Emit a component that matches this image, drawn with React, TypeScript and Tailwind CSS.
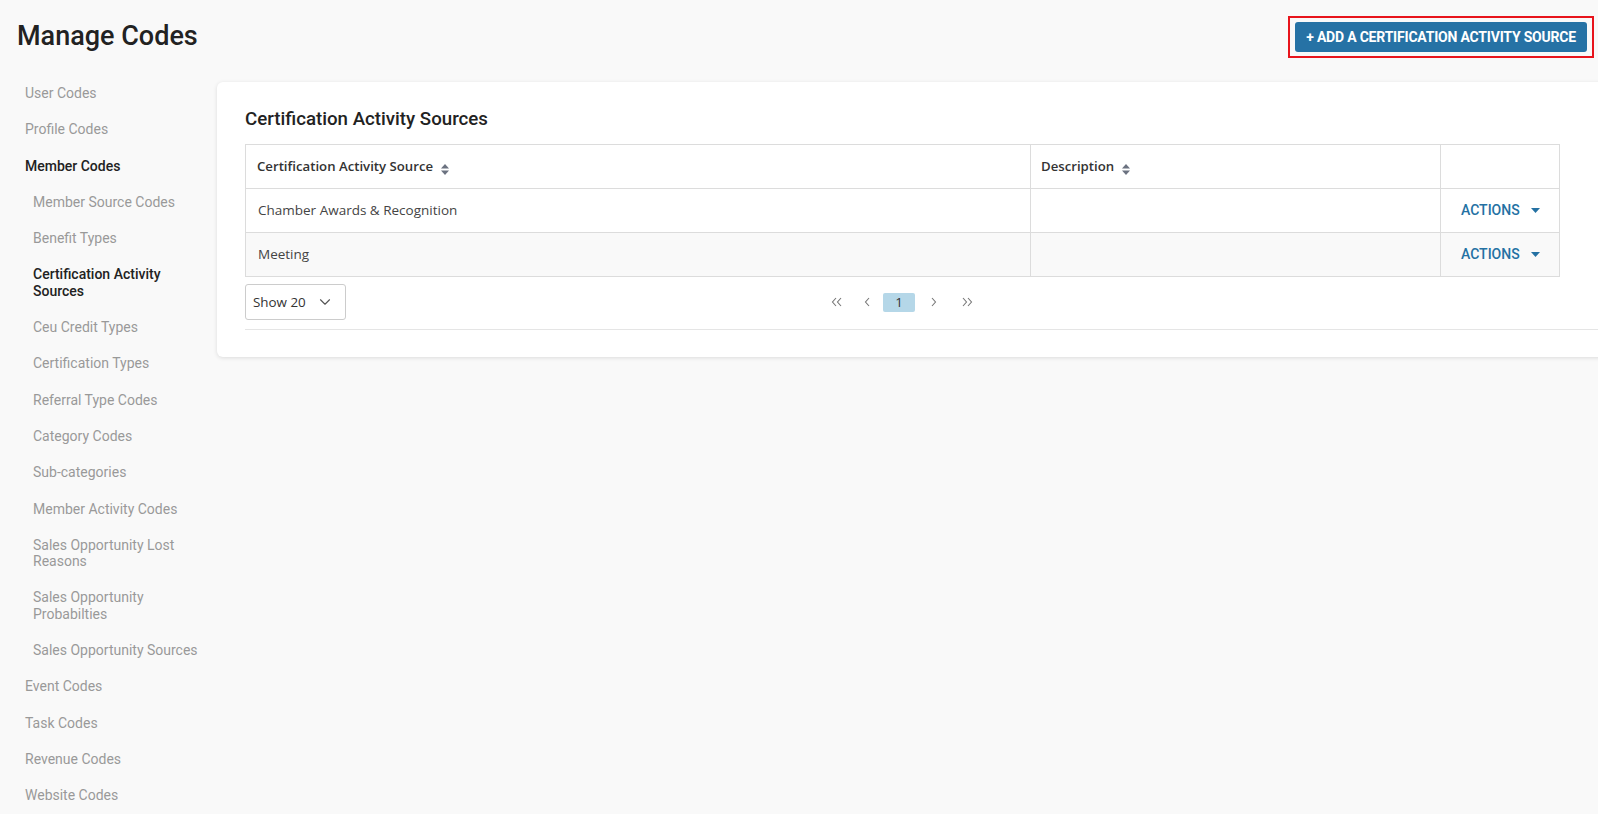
import { ChevronDown } from "lucide-react";

type NavItem = { label: string; nested?: boolean; active?: boolean };

const navItems: NavItem[] = [
  { label: "User Codes" },
  { label: "Profile Codes" },
  { label: "Member Codes", active: true },
  { label: "Member Source Codes", nested: true },
  { label: "Benefit Types", nested: true },
  { label: "Certification Activity Sources", nested: true, active: true },
  { label: "Ceu Credit Types", nested: true },
  { label: "Certification Types", nested: true },
  { label: "Referral Type Codes", nested: true },
  { label: "Category Codes", nested: true },
  { label: "Sub-categories", nested: true },
  { label: "Member Activity Codes", nested: true },
  { label: "Sales Opportunity Lost Reasons", nested: true },
  { label: "Sales Opportunity Probabilties", nested: true },
  { label: "Sales Opportunity Sources", nested: true },
  { label: "Event Codes" },
  { label: "Task Codes" },
  { label: "Revenue Codes" },
  { label: "Website Codes" },
];

const rows = ["Chamber Awards & Recognition", "Meeting"];

function SortIcon() {
  return (
    <svg width="8" height="11" viewBox="0 0 8 11" className="ml-[8px] inline-block translate-y-[2px]">
      <path d="M4 0 L8 4.5 H0 Z" fill="#6b7280" />
      <path d="M4 11 L8 6.5 H0 Z" fill="#6b7280" />
    </svg>
  );
}

function Caret() {
  return (
    <svg width="9" height="5" viewBox="0 0 9 5" className="ml-[11px] inline-block">
      <path d="M0 0 H9 L4.5 5 Z" fill="#2471a3" />
    </svg>
  );
}

// small pager chevrons, count = 1 or 2, dir = -1 (left) or 1 (right)
function Chev({ count, dir }: { count: 1 | 2; dir: -1 | 1 }) {
  const w = count === 2 ? 11 : 6;
  const paths =
    count === 2
      ? dir < 0
        ? ["M5 1 L1.5 5 L5 9", "M10 1 L6.5 5 L10 9"]
        : ["M1 1 L4.5 5 L1 9", "M6 1 L9.5 5 L6 9"]
      : dir < 0
        ? ["M5 1 L1.5 5 L5 9"]
        : ["M1 1 L4.5 5 L1 9"];
  return (
    <svg width={w} height="10" viewBox={`0 0 ${w} 10`} fill="none" stroke="#777" strokeWidth="1.1">
      {paths.map((d) => (
        <path key={d} d={d} />
      ))}
    </svg>
  );
}

export default function App() {
  return (
    <div className="min-h-[814px] w-full overflow-hidden bg-[#f9f9f9] font-['Roboto',sans-serif]">
      <div className="flex items-start justify-between pl-[17px] pr-[4px] pt-[16px]">
        <h1 className="mt-[3px] text-[27px] font-medium leading-[34px] text-[#222]">Manage Codes</h1>
        <div className="border-2 border-[#e8141c] px-[5px] py-[4px]">
          <button className="flex h-[30px] items-center rounded-[3px] bg-[#2672a5] px-[11px] text-[14px] font-bold uppercase tracking-[-0.2px] text-white">
            + Add a Certification Activity Source
          </button>
        </div>
      </div>

      <div className="mt-[17px] flex items-start">
        <nav className="w-[217px] shrink-0 pb-[8px]">
          {navItems.map((item) => (
            <div
              key={item.label}
              className={`py-[10px] text-[14px] leading-[16.3px] ${item.nested ? "pl-[33px]" : "pl-[25px]"} ${
                item.active ? "font-medium text-[#222]" : "text-[#999]"
              }`}
            >
              <span className="block max-w-[170px]">{item.label}</span>
            </div>
          ))}
        </nav>

        <div className="mt-[7px] w-[1420px] shrink-0 rounded-[6px] bg-white pb-[27px] pl-[28px] pt-[26px] shadow-[0_1px_4px_rgba(0,0,0,0.12)]">
          <h2 className="text-[18.7px] font-medium leading-[22px] text-[#222]">Certification Activity Sources</h2>
          <table className="mt-[14px] w-[1315px] border-collapse font-['Open_Sans',sans-serif]">
            <thead>
              <tr className="h-[44px]">
                <th className="w-[785px] border border-[#dcdcdc] pl-[11px] text-left text-[13.2px] font-semibold text-[#333]">
                  Certification Activity Source
                  <SortIcon />
                </th>
                <th className="w-[410px] border border-[#dcdcdc] pl-[10px] text-left text-[13.2px] font-semibold text-[#333]">
                  Description
                  <SortIcon />
                </th>
                <th className="border border-[#dcdcdc]" />
              </tr>
            </thead>
            <tbody>
              {rows.map((row, i) => (
                <tr key={row} className={`h-[44px] ${i % 2 === 1 ? "bg-[#f9f9f9]" : "bg-white"}`}>
                  <td className="border border-[#dcdcdc] pl-[12px] text-[13.5px] text-[#444]">{row}</td>
                  <td className="border border-[#dcdcdc]" />
                  <td className="border border-[#dcdcdc] pb-[3px] pl-[20px]">
                    <span className="font-['Roboto',sans-serif] text-[14px] font-medium text-[#2471a3]">ACTIONS</span>
                    <Caret />
                  </td>
                </tr>
              ))}
            </tbody>
          </table>

          <div className="mt-[7px] flex items-center">
            <div className="flex h-[36px] w-[101px] items-center justify-between rounded-[3px] border border-[#ccc] bg-white pl-[7px] pr-[11px] font-['Open_Sans',sans-serif] text-[13.4px] text-[#333]">
              Show 20
              <ChevronDown size={18} strokeWidth={1.5} className="text-[#555]" />
            </div>
            <div className="ml-[485px] flex items-center font-['Open_Sans',sans-serif] text-[13.4px]">
              <Chev count={2} dir={-1} />
              <span className="ml-[22px]">
                <Chev count={1} dir={-1} />
              </span>
              <span className="ml-[13px] flex h-[19px] w-[32px] items-center justify-center rounded-[2px] bg-[#b5d7e8] text-[#333]">
                1
              </span>
              <span className="ml-[16px]">
                <Chev count={1} dir={1} />
              </span>
              <span className="ml-[25px]">
                <Chev count={2} dir={1} />
              </span>
            </div>
          </div>
          <div className="mt-[9px] border-t border-[#e5e5e5]" />
        </div>
      </div>
    </div>
  );
}
